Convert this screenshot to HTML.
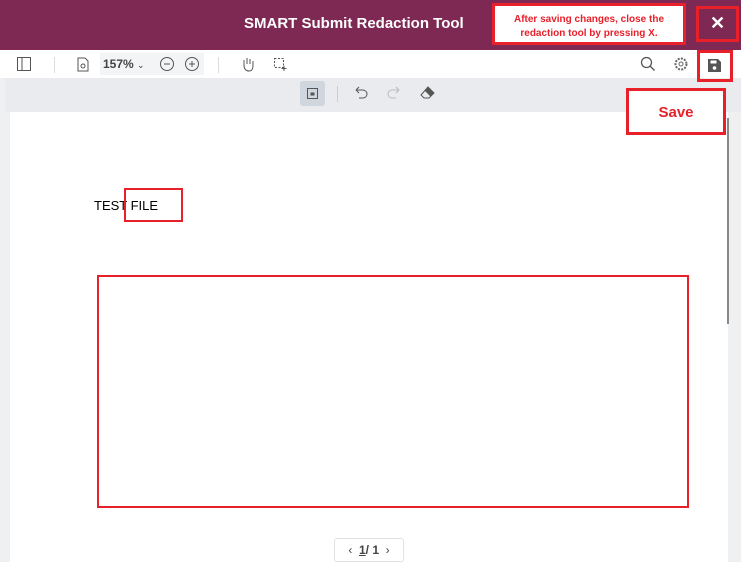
<!DOCTYPE html><html><head><style>
body{margin:0;width:741px;height:562px;overflow:hidden;font-family:"Liberation Sans",sans-serif;background:#eef0f2;position:relative}
.a{position:absolute}
.r{position:absolute;border:2px solid #e8202a;box-sizing:border-box}
svg{position:absolute}
</style></head><body>
<div class="a" style="left:0;top:0;width:741px;height:50px;background:#7d2953"></div>
<div class="a" style="left:244px;top:15px;color:#fff;font-weight:bold;font-size:15px">SMART Submit Redaction Tool</div>
<div class="r" style="left:492px;top:3px;width:194px;height:42px;background:#fff;border-width:3px"></div>
<div class="a" style="left:492px;top:13px;width:194px;text-align:center;color:#e8202a;font-size:10px;font-weight:bold;line-height:14px">After saving changes, close the<br>redaction tool by pressing X.</div>
<div class="r" style="left:696px;top:6px;width:43px;height:36px;border-width:3px"></div>
<div class="a" style="left:710px;top:13px;color:#fff;font-size:18px;font-weight:bold">✕</div>
<div class="a" style="left:0;top:50px;width:741px;height:28px;background:#fff"></div>
<div class="a" style="left:5px;top:78px;width:736px;height:34px;background:#e9ebee"></div>
<div class="a" style="left:10px;top:112px;width:718px;height:450px;background:#fff"></div>
<div class="a" style="left:727px;top:118px;width:2px;height:206px;background:#888"></div>
<svg style="left:16px;top:56px" width="16" height="16"><rect x="1.5" y="1.5" width="13" height="13" fill="none" stroke="#555"/><line x1="6" y1="2" x2="6" y2="14" stroke="#555"/></svg>
<div class="a" style="left:54px;top:57px;width:1px;height:16px;background:#ddd"></div>
<div class="a" style="left:100px;top:53px;width:104px;height:22px;background:#f3f4f5"></div>
<svg style="left:77px;top:57px" width="12" height="15"><path d="M1 1h7l3 3v10H1z" fill="none" stroke="#555"/><circle cx="6" cy="9" r="2" fill="none" stroke="#555"/></svg>
<div class="a" style="left:103px;top:57px;font-size:12px;font-weight:bold;color:#444">157% <span style="font-weight:normal;font-size:9px">⌄</span></div>
<svg style="left:159px;top:56px" width="16" height="16"><circle cx="8" cy="8" r="6.5" fill="none" stroke="#555"/><path d="M5 8h6" stroke="#555"/></svg>
<svg style="left:184px;top:56px" width="16" height="16"><circle cx="8" cy="8" r="6.5" fill="none" stroke="#555"/><path d="M5 8h6M8 5v6" stroke="#555"/></svg>
<div class="a" style="left:218px;top:57px;width:1px;height:16px;background:#ddd"></div>
<svg style="left:240px;top:56px" width="16" height="16"><path d="M4 9V4M7 8V2M10 8V3M13 9V5M4 9c0 4 2 6 5 6s4-2 4-6" fill="none" stroke="#555"/></svg>
<svg style="left:273px;top:57px" width="14" height="14"><rect x="1.5" y="1.5" width="9" height="9" fill="none" stroke="#555" stroke-dasharray="2 1.5"/><path d="M11 9v5M8.5 11.5h5" stroke="#555"/></svg>
<svg style="left:640px;top:56px" width="16" height="16"><circle cx="6.5" cy="6.5" r="5" fill="none" stroke="#555" stroke-width="1.3"/><path d="M10 10l4.5 4.5" stroke="#555" stroke-width="1.3"/></svg>
<svg style="left:673px;top:56px" width="16" height="16"><circle cx="8" cy="8" r="5.5" fill="none" stroke="#666" stroke-dasharray="2 1.2" stroke-width="2"/><circle cx="8" cy="8" r="2" fill="none" stroke="#666"/></svg>
<div class="r" style="left:697px;top:50px;width:36px;height:32px;border-width:3px"></div>
<svg style="left:707px;top:58px" width="15" height="15"><path d="M1 1h10l3 3v10H1z" fill="#555"/><rect x="3.5" y="2.5" width="6" height="3" fill="#fff"/><circle cx="7.5" cy="10" r="1.8" fill="#fff"/></svg>
<div class="a" style="left:300px;top:81px;width:25px;height:25px;background:#cfd6dd;border-radius:3px"></div>
<svg style="left:306px;top:87px" width="13" height="13"><rect x="1.5" y="1.5" width="10" height="10" fill="none" stroke="#555"/><rect x="4.5" y="5.5" width="4" height="3" fill="#555"/></svg>
<div class="a" style="left:337px;top:86px;width:1px;height:16px;background:#ccc"></div>
<svg style="left:353px;top:86px" width="16" height="14"><path d="M3 4h7a4 4 0 010 8H6M3 4l3-3M3 4l3 3" fill="none" stroke="#555"/></svg>
<svg style="left:386px;top:86px" width="16" height="14"><path d="M13 4H6a4 4 0 000 8h4M13 4l-3-3M13 4l-3 3" fill="none" stroke="#bbb"/></svg>
<svg style="left:420px;top:86px" width="16" height="14"><path d="M8 1l6 6-5 5H4L1 9z" fill="none" stroke="#555"/><path d="M8 1l6 6-3.5 3.5L4.5 4.5z" fill="#555"/></svg>
<div class="r" style="left:626px;top:88px;width:100px;height:47px;background:#fff;border-width:3px"></div>
<div class="a" style="left:626px;top:104px;width:100px;text-align:center;color:#e8202a;font-weight:bold;font-size:15px">Save</div>
<div class="a" style="left:94px;top:198px;font-size:13px;color:#000">TEST FILE</div>
<div class="r" style="left:124px;top:188px;width:59px;height:34px"></div>
<div class="r" style="left:97px;top:275px;width:592px;height:233px"></div>
<div class="a" style="left:334px;top:538px;width:70px;height:24px;border:1px solid #e2e2e2;border-radius:3px;background:#fff;box-sizing:border-box;font-size:12px;color:#444;line-height:22px;text-align:center">‹ &nbsp;<b><u>1</u>/ 1</b>&nbsp; ›</div>
</body></html>
